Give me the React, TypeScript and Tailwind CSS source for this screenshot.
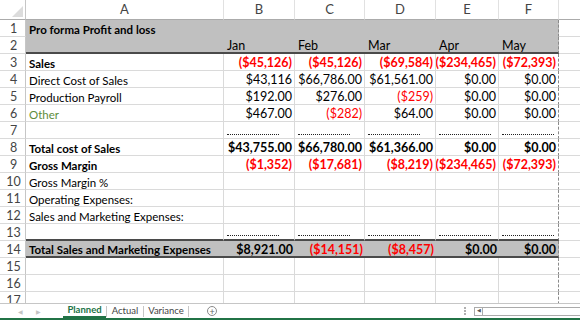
import { ReactNode } from 'react'

type Cell = {
  t?: string
  bold?: boolean
  color?: 'red' | 'green'
  right?: boolean
  dots?: boolean
}

type Row = {
  cells: Cell[]
  fill?: boolean
  thickBottom?: boolean
  thinBottomHidden?: boolean
}

const L = (t: string, bold = false, color?: 'green'): Cell => ({ t, bold, color })
const N = (t: string, bold = false, red = false): Cell => ({ t, bold, right: true, color: red ? 'red' : undefined })
const D: Cell = { dots: true }
const E: Cell = {}

const rows: Row[] = [
  { cells: [L('Pro forma Profit and loss', true), E, E, E, E, E], fill: true, thinBottomHidden: true },
  { cells: [E, L('Jan'), L('Feb'), L('Mar'), L('Apr'), L('May')], fill: true, thickBottom: true },
  {
    cells: [L('Sales', true), N('($45,126)', true, true), N('($45,126)', true, true), N('($69,584)', true, true), N('($234,465)', true, true), N('($72,393)', true, true)]
  },
  { cells: [L('Direct Cost of Sales'), N('$43,116'), N('$66,786.00'), N('$61,561.00'), N('$0.00'), N('$0.00')] },
  { cells: [L('Production Payroll'), N('$192.00'), N('$276.00'), N('($259)', false, true), N('$0.00'), N('$0.00')] },
  { cells: [L('Other', false, 'green'), N('$467.00'), N('($282)', false, true), N('$64.00'), N('$0.00'), N('$0.00')] },
  { cells: [E, D, D, D, D, D] },
  {
    cells: [L('Total cost of Sales', true), N('$43,755.00', true), N('$66,780.00', true), N('$61,366.00', true), N('$0.00', true), N('$0.00', true)]
  },
  {
    cells: [L('Gross Margin', true), N('($1,352)', true, true), N('($17,681)', true, true), N('($8,219)', true, true), N('($234,465)', true, true), N('($72,393)', true, true)]
  },
  { cells: [L('Gross Margin %'), E, E, E, E, E] },
  { cells: [L('Operating Expenses:'), E, E, E, E, E] },
  { cells: [L('Sales and Marketing Expenses:'), E, E, E, E, E] },
  { cells: [E, D, D, D, D, D], thickBottom: true },
  {
    cells: [L('Total Sales and Marketing Expenses', true), N('$8,921.00', true), N('($14,151)', true, true), N('($8,457)', true, true), N('$0.00', true), N('$0.00', true)],
    fill: true,
    thickBottom: true
  },
  { cells: [E, E, E, E, E, E] },
  { cells: [E, E, E, E, E, E] },
  { cells: [E, E, E, E, E, E] }
]

const letters = ['A', 'B', 'C', 'D', 'E', 'F', '']

const GridCell = ({ cell, row, first, last }: { cell: Cell; row: Row; first: boolean; last: boolean }) => {
  let cls = 'h-[17px] flex items-center px-[3px] pt-[3px] whitespace-nowrap overflow-hidden border-b '
  cls += first ? 'text-[11.5px] ' : 'text-[12.5px] '
  if (row.thickBottom) cls += 'border-b-2 border-b-[#4a4a4a] '
  else if (row.thinBottomHidden) cls += 'border-b-[#c0c0c0] '
  else cls += 'border-b-[#dadada] '
  if (row.fill) cls += 'bg-[#c0c0c0] '
  if (last) cls += 'border-r [border-right-style:dashed] border-r-[#8a8a8a] '
  else if (!row.fill) cls += 'border-r border-r-[#dadada] '
  if (cell.right) cls += 'justify-end pr-[2px] '
  if (cell.bold) cls += 'font-bold '
  if (cell.color === 'red') cls += 'text-[#ff0000] '
  else if (cell.color === 'green') cls += 'text-[#5e8c3a] '
  else cls += 'text-black '

  return (
    <div className={cls}>
      {cell.dots ? <div className="w-[52px] self-end mb-[3px] border-b border-dotted border-[#222]" /> : cell.t}
    </div>
  )
}

const SheetRow = ({ row, n }: { row: Row; n: number }) => (
  <>
    <div className="h-[17px] flex items-center justify-center pl-[2px] pt-[3px] border-r border-r-[#c6c6c6] border-b border-b-[#dadada] text-[#444] text-[12.5px]">
      {n}
    </div>
    {row.cells.map((c, i) => (
      <GridCell key={i} cell={c} row={row} first={i === 0} last={i === 5} />
    ))}
    <div className="h-[17px] border-b border-b-[#dadada]" />
  </>
)

const TabSep = () => <div className="w-px h-[11px] bg-[#c6c6c6] shrink-0" />

const Tabs = (): ReactNode => (
  <div className="h-[15px] flex items-center border-t border-[#c6c6c6] bg-white text-[9.5px] text-[#444]">
    <div className="w-[63px] shrink-0 flex items-center pl-[18px] gap-[13px] text-[#c4c4c4] text-[6px]">
      <span>◀</span>
      <span>▶</span>
    </div>
    <div className="w-[43px] shrink-0 h-full flex items-center justify-center font-bold text-[#217346] border-b-2 border-[#217346] bg-white">
      Planned
    </div>
    <TabSep />
    <div className="w-[36px] shrink-0 flex justify-center">Actual</div>
    <TabSep />
    <div className="w-[44px] shrink-0 flex justify-center">Variance</div>
    <TabSep />
    <div className="ml-[18px] w-[10px] h-[10px] shrink-0 rounded-full border border-[#8a8a8a] flex items-center justify-center text-[9px] leading-none text-[#666]">
      +
    </div>
    <div className="ml-auto flex items-center">
      <div className="flex flex-col gap-[1px] mr-[8px]">
        <div className="w-[2px] h-[2px] bg-[#b0b0b0]" />
        <div className="w-[2px] h-[2px] bg-[#b0b0b0]" />
        <div className="w-[2px] h-[2px] bg-[#b0b0b0]" />
      </div>
      <div className="w-[9px] h-[9px] border border-[#ababab] flex items-center justify-center text-[5px] text-[#555]">
        ◀
      </div>
      <div className="w-[97px] h-[9px] border-y border-[#ababab]" />
    </div>
  </div>
)

export default function App() {
  return (
    <div className="w-[580px] h-[320px] overflow-hidden bg-white flex flex-col font-['Lato','Liberation_Sans',sans-serif] text-[12px]">
      <div className="h-[303px] overflow-hidden">
        <div className="grid grid-cols-[26px_198px_71px_70px_71px_63px_60px_1fr]">
          <div className="h-[20px] border-r border-r-[#c6c6c6] border-b border-b-[#ababab] flex items-end justify-end pr-[2px] pb-[2px]">
            <svg width="11" height="11" viewBox="0 0 11 11">
              <polygon points="11,0 11,11 0,11" fill="#dcdcdc" />
            </svg>
          </div>
          {letters.map((l, i) => (
            <div
              key={i}
              className={
                'h-[20px] flex items-center justify-center text-[#444] text-[13px] border-b border-b-[#ababab] ' +
                (i < 6 ? 'border-r border-r-[#e1e1e1]' : '')
              }
            >
              {l}
            </div>
          ))}
          {rows.map((r, i) => (
            <SheetRow key={i} row={r} n={i + 1} />
          ))}
        </div>
      </div>
      <Tabs />
      <div className="h-[2px] bg-[#217346]" />
    </div>
  )
}
